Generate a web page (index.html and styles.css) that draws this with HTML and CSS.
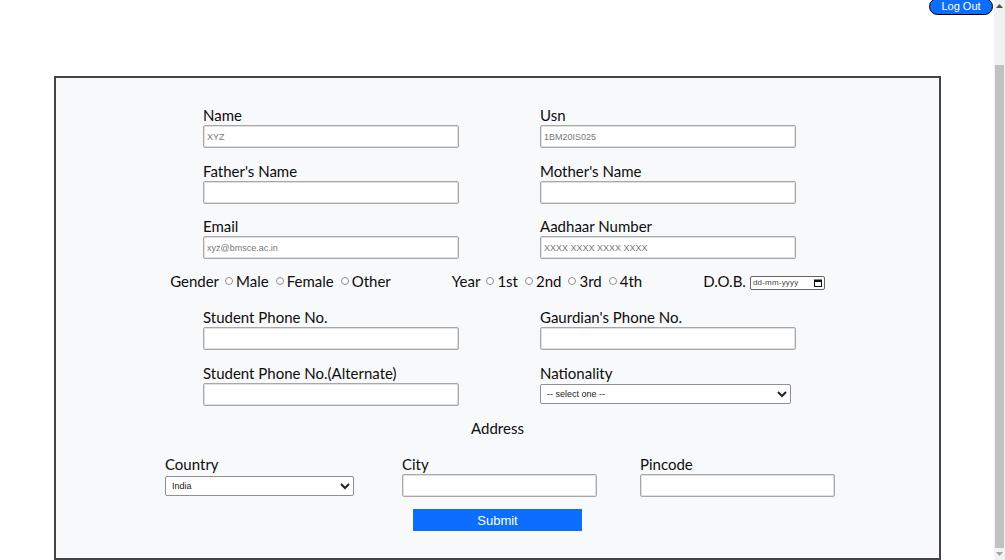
FILE: index.html
```html
<!DOCTYPE html>
<html lang="en">
<head>
<meta charset="utf-8">
<title>Student Registration</title>
<link rel="stylesheet" href="styles.css">
</head>
<body>
<div class="page">
  <header class="topbar">
    <button class="logout" type="button">Log Out</button>
  </header>
  <form class="form-box">
    <div class="two-col">
      <div class="field"><label class="lbl" for="name">Name</label><input class="txt" id="name" type="text" placeholder="XYZ"></div>
      <div class="field"><label class="lbl" for="usn">Usn</label><input class="txt" id="usn" type="text" placeholder="1BM20IS025"></div>
      <div class="field"><label class="lbl" for="fname">Father's Name</label><input class="txt" id="fname" type="text"></div>
      <div class="field"><label class="lbl" for="mname">Mother's Name</label><input class="txt" id="mname" type="text"></div>
      <div class="field"><label class="lbl" for="email">Email</label><input class="txt" id="email" type="text" placeholder="xyz@bmsce.ac.in"></div>
      <div class="field"><label class="lbl" for="aadhaar">Aadhaar Number</label><input class="txt" id="aadhaar" type="text" placeholder="XXXX XXXX XXXX XXXX"></div>
    </div>

    <div class="choice-row">
      <div class="group">
        <span class="group-title">Gender</span>
        <input class="radio" type="radio" name="gender" id="g1"><label class="opt" for="g1">Male</label>
        <input class="radio" type="radio" name="gender" id="g2"><label class="opt" for="g2">Female</label>
        <input class="radio" type="radio" name="gender" id="g3"><label class="opt" for="g3">Other</label>
      </div>
      <div class="group">
        <span class="group-title">Year</span>
        <input class="radio" type="radio" name="year" id="y1"><label class="opt" for="y1">1st</label>
        <input class="radio" type="radio" name="year" id="y2"><label class="opt" for="y2">2nd</label>
        <input class="radio" type="radio" name="year" id="y3"><label class="opt" for="y3">3rd</label>
        <input class="radio" type="radio" name="year" id="y4"><label class="opt" for="y4">4th</label>
      </div>
      <div class="group">
        <span class="group-title dob-title">D.O.B.</span>
        <span class="date-box"><span class="date-text">dd-mm-yyyy</span><svg class="cal" viewBox="0 0 8 8" width="8" height="8"><rect x="0.5" y="1" width="7" height="6.5" fill="none" stroke="#111" stroke-width="1"/><rect x="0.5" y="1" width="7" height="2" fill="#111"/></svg></span>
      </div>
    </div>

    <div class="two-col two-col-lower">
      <div class="field"><label class="lbl" for="sphone">Student Phone No.</label><input class="txt" id="sphone" type="text"></div>
      <div class="field"><label class="lbl" for="gphone">Gaurdian's Phone No.</label><input class="txt" id="gphone" type="text"></div>
      <div class="field"><label class="lbl" for="aphone">Student Phone No.(Alternate)</label><input class="txt" id="aphone" type="text"></div>
      <div class="field"><label class="lbl" for="nat">Nationality</label>
        <select class="sel sel-nat" id="nat"><option>-- select one --</option><option>Indian</option><option>Other</option></select>
      </div>
    </div>

    <div class="address-title">Address</div>

    <div class="three-col">
      <div class="field"><label class="lbl" for="country">Country</label>
        <select class="sel sel-country" id="country"><option>India</option></select>
      </div>
      <div class="field"><label class="lbl" for="city">City</label><input class="txt txt-short" id="city" type="text"></div>
      <div class="field"><label class="lbl" for="pin">Pincode</label><input class="txt txt-short" id="pin" type="text"></div>
    </div>

    <button class="submit" type="submit">Submit</button>
  </form>
</div>
<div class="scrollbar" aria-hidden="true">
  <div class="sb-btn"><svg viewBox="0 0 7 4" width="7" height="4"><path d="M0 4 L3.5 0 L7 4 Z" fill="#505050"/></svg></div>
  <div class="sb-track"><div class="sb-thumb"></div></div>
  <div class="sb-btn"><svg viewBox="0 0 7 4" width="7" height="4"><path d="M0 0 L3.5 4 L7 0 Z" fill="#a3a3a3"/></svg></div>
</div>
</body>
</html>
```

FILE: styles.css
```css
html { background: #ffffff; }
body {
  margin: 0;
  height: 560px;
  overflow: hidden;
  display: flex;
  font-family: Lato, "Liberation Sans", sans-serif;
  color: #111;
}

.page { flex: 1; min-width: 0; }

/* scrollbar drawn as part of the layout */
.scrollbar {
  width: 11px;
  height: 560px;
  display: flex;
  flex-direction: column;
  background: #f1f1f1;
}
.sb-btn {
  height: 12px;
  display: flex;
  align-items: center;
  justify-content: center;
}
.sb-btn svg { display: block; }
.sb-track {
  flex: 1;
  display: flex;
  flex-direction: column;
  padding: 53px 1px 0;
}
.sb-thumb { flex: 1; background: #c1c1c1; }

.topbar {
  display: flex;
  justify-content: flex-end;
  padding-right: 1px;
}
.logout {
  width: 64px;
  height: 17px;
  margin-top: -2px;
  padding: 0;
  border: 1px solid #000;
  border-radius: 9px;
  background: #0d6efd;
  color: #fff;
  font: 11px "Liberation Sans", Arial, sans-serif;
  line-height: 15px;
}

.form-box {
  margin: 61px 0 0 54px;
  width: 883px;
  border: 2px solid #444;
  background: #f8f9fa;
  padding: 28px 0 27px;
}

.two-col {
  display: grid;
  grid-template-columns: 256px 256px;
  column-gap: 81px;
  row-gap: 13.5px;
  margin-left: 147px;
}
.two-col-lower { row-gap: 14px; }

.field { display: flex; flex-direction: column; align-items: flex-start; }
.lbl {
  display: block;
  font-size: 15px;
  line-height: 18px;
  margin-bottom: 1px;
  color: #0d0d0d;
}

.txt {
  box-sizing: border-box;
  width: 256px;
  height: 23px;
  margin: 0;
  padding: 0 3px;
  border: 1px solid #a8a8a8;
  border-radius: 2px;
  box-shadow: inset 0 0 0 1px #e0e0e0;
  background: #fff;
  font: 9px "Liberation Sans", Arial, sans-serif;
  color: #222;
}
.txt::placeholder { color: #777; }
.txt-short { width: 195px; }

.sel {
  box-sizing: border-box;
  height: 20px;
  margin: 1px 0 0;
  padding: 0 2px;
  border: 1px solid #8f8f8f;
  border-radius: 2px;
  background: #fff;
  font: 9px "Liberation Sans", Arial, sans-serif;
  color: #222;
}
.sel-nat { width: 251px; }
.sel-country { width: 189px; }
.three-col .sel { margin-top: 2px; }

.choice-row {
  display: flex;
  justify-content: center;
  align-items: center;
  gap: 61px;
  height: 18px;
  margin: 13px 0 18px;
  font-size: 15px;
  line-height: 18px;
  color: #0d0d0d;
}
.group { display: flex; align-items: center; }
.group-title { margin-right: 6px; }
.dob-title { margin-right: 4px; }
.radio {
  appearance: none;
  -webkit-appearance: none;
  box-sizing: border-box;
  width: 8px;
  height: 8px;
  margin: 0 3px 0 0;
  border: 1px solid #8f8f8f;
  border-radius: 50%;
  background: #fff;
}
.opt + .radio { margin-left: 7px; }

.date-box {
  box-sizing: border-box;
  display: flex;
  align-items: center;
  justify-content: space-between;
  width: 75px;
  height: 14px;
  margin-top: 3px;
  padding: 0 2px;
  border: 1px solid #666;
  border-radius: 2px;
  background: #fff;
}
.date-text {
  font: 8px "Liberation Sans", Arial, sans-serif;
  color: #444;
  letter-spacing: 0.2px;
}
.cal { display: block; }

.address-title {
  margin-top: 13px;
  text-align: center;
  font-size: 15px;
  line-height: 18px;
  color: #0d0d0d;
}

.three-col {
  display: grid;
  grid-template-columns: 237px 238px 238px;
  margin: 18px 0 0 109px;
}

.submit {
  display: block;
  width: 169px;
  height: 22px;
  margin: 12px auto 0;
  padding: 0;
  border: none;
  background: #0d6efd;
  color: #fff;
  font: 13px "Liberation Sans", Arial, sans-serif;
}
```
